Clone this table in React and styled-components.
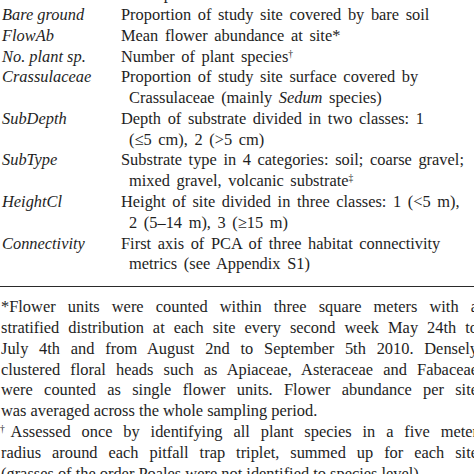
import React from 'react';
import styled, { createGlobalStyle } from 'styled-components';

const GlobalStyle = createGlobalStyle`
    html, body {
        margin: 0;
        padding: 0;
        background: #FFFFFF;
        overflow: hidden;
    }
    body {
        width: 474px;
        height: 474px;
        font-family: "Liberation Serif", "Times New Roman", serif;
        color: #1e1e1e;
    }
`;

const StyledPage = styled.div`
    width: 474px;
    height: 474px;
    overflow: hidden;
`;

const StyledSheet = styled.div`
    width: 490px;
    margin-top: -15.9px;
    font-size: 16.4px;
    line-height: 20.8px;
`;

const StyledTable = styled.div`
    display: grid;
    grid-template-columns: 119px 1fr;
    padding-left: 2px;
    word-spacing: 2.5px;
`;

const StyledName = styled.div`
    font-style: ${({ $head }) => ($head ? 'normal' : 'italic')};
    white-space: nowrap;
    word-spacing: 0;
`;

const StyledDesc = styled.div`
    white-space: nowrap;
    padding-left: 8px;
    text-indent: -8px;
`;

const StyledRule = styled.hr`
    margin: 10.5px 0 10.5px 0;
    border: none;
    border-top: 1.4px solid #2a2a2a;
    width: 100%;
`;

const StyledNotes = styled.div`
    width: 477px;
    padding-left: 1px;
`;

const StyledLine = styled.div`
    white-space: nowrap;
    text-align: ${({ $last }) => ($last ? 'left' : 'justify')};
    text-align-last: ${({ $last }) => ($last ? 'left' : 'justify')};
`;

const Sup = styled.sup`
    font-size: 9.5px;
    line-height: 0;
    vertical-align: 5px;
    margin-left: ${({ $tight }) => ($tight ? '-1px' : '0')};
    margin-right: ${({ $tight }) => ($tight ? '-1px' : '0')};
`;

const rows = [
    ['Bare ground', ['Proportion of study site covered by bare soil']],
    ['FlowAb', ['Mean flower abundance at site*']],
    ['No. plant sp.', [<>Number of plant species<Sup>†</Sup></>]],
    ['Crassulaceae', ['Proportion of study site surface covered by', <>Crassulaceae (mainly <i>Sedum</i> species)</>]],
    ['SubDepth', ['Depth of substrate divided in two classes: 1', '(≤5 cm), 2 (>5 cm)']],
    ['SubType', ['Substrate type in 4 categories: soil; coarse gravel;', <>mixed gravel, volcanic substrate<Sup>‡</Sup></>]],
    ['HeightCl', ['Height of site divided in three classes: 1 (<5 m),', '2 (5–14 m), 3 (≥15 m)']],
    ['Connectivity', ['First axis of PCA of three habitat connectivity', 'metrics (see Appendix S1)']],
];

const notes = [
    ['*Flower units were counted within three square meters with a'],
    ['stratified distribution at each site every second week May 24th to'],
    ['July 4th and from August 2nd to September 5th 2010. Densely'],
    ['clustered floral heads such as Apiaceae, Asteraceae and Fabaceae'],
    ['were counted as single flower units. Flower abundance per site'],
    ['was averaged across the whole sampling period.', true],
    [<><Sup $tight>†</Sup>Assessed once by identifying all plant species in a five meter</>],
    ['radius around each pitfall trap triplet, summed up for each site'],
    ['(grasses of the order Poales were not identified to species level).', true],
];

const App = () => (
    <StyledPage>
        <GlobalStyle />
        <StyledSheet>
            <StyledTable>
                <StyledName $head>Variable</StyledName>
                <StyledDesc>Description of variable</StyledDesc>
                {rows.map(([name, lines]) => (
                    <React.Fragment key={name}>
                        <StyledName>{name}</StyledName>
                        <StyledDesc>
                            {lines.map((l, i) => (
                                <React.Fragment key={i}>
                                    {i > 0 && <br />}
                                    {l}
                                </React.Fragment>
                            ))}
                        </StyledDesc>
                    </React.Fragment>
                ))}
            </StyledTable>
            <StyledRule />
            <StyledNotes>
                {notes.map(([text, last], i) => (
                    <StyledLine key={i} $last={last}>{text}</StyledLine>
                ))}
            </StyledNotes>
        </StyledSheet>
    </StyledPage>
);

export default App;
